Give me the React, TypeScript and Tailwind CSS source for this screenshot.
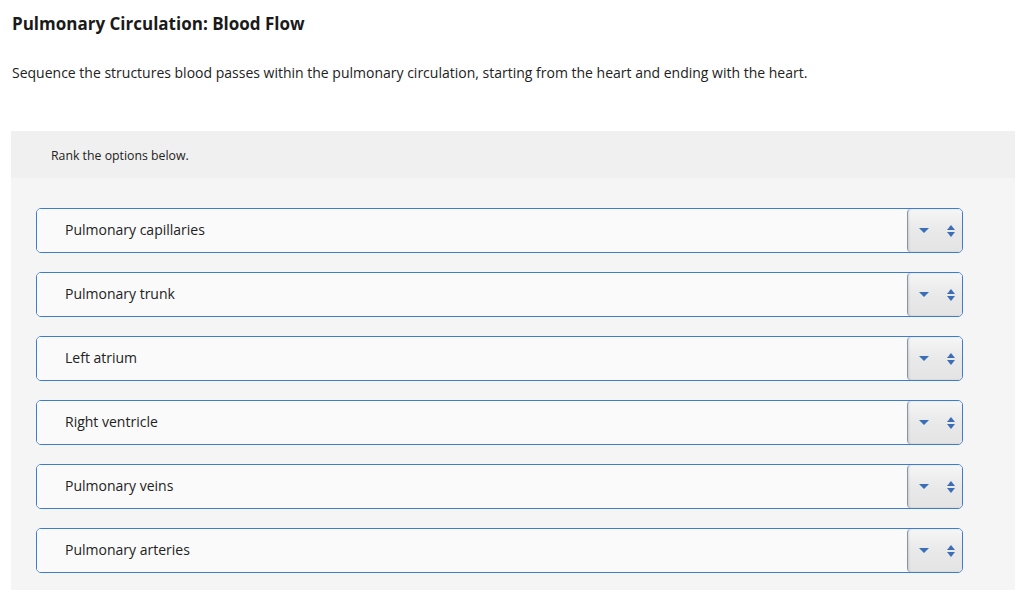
import React from "react";

const items = [
  "Pulmonary capillaries",
  "Pulmonary trunk",
  "Left atrium",
  "Right ventricle",
  "Pulmonary veins",
  "Pulmonary arteries",
];

function Row({ label }: { label: string }) {
  return (
    <div className="flex h-[45px] w-[927px] rounded-[5px] border border-[#3b7dd0]">
      <div className="flex flex-1 items-center rounded-l-[4px] bg-[#fafafa] pb-[2px] pl-[28px] text-[14px] text-[#222]">
        {label}
      </div>
      <div className="flex w-[55px] items-center justify-between rounded-[4px] border-l border-[#7f97b8] bg-gradient-to-b from-[#f6f6f6] via-[#e9e9e9] to-[#e4e4e4] pl-[11px] pr-[7px] shadow-[inset_1px_0_2px_rgba(0,0,0,0.12)]">
        <svg width="10" height="6" viewBox="0 0 10 6">
          <polygon points="0,0 10,0 5,5" fill="#3a6fb8" />
        </svg>
        <svg width="8" height="12" viewBox="0 0 8 12">
          <polygon points="4,0 8,5 0,5" fill="#3a6fb8" />
          <polygon points="0,7 8,7 4,12" fill="#3a6fb8" />
        </svg>
      </div>
    </div>
  );
}

export default function App() {
  return (
    <div className="min-h-[599px] bg-white font-['Open_Sans',sans-serif] text-[#222]">
      <div className="px-[12px] pt-[13px]">
        <h1 className="text-[17px] font-bold leading-[22px] text-[#1a1a1a]">
          Pulmonary Circulation: Blood Flow
        </h1>
        <p className="mt-[28px] text-[14px] leading-[20px] text-[#222]">
          Sequence the structures blood passes within the pulmonary circulation, starting from the heart and ending with the heart.
        </p>
      </div>
      <div className="ml-[11px] mt-[48px] w-[1004px] bg-[#f5f5f5] pb-[17px]">
        <div className="flex h-[47px] items-center bg-[#f0f0f0] pl-[40px] pt-[4px] text-[12.3px] text-[#222]">
          Rank the options below.
        </div>
        <div className="flex flex-col gap-[19px] pl-[25px] pt-[30px]">
          {items.map((it) => (
            <Row key={it} label={it} />
          ))}
        </div>
      </div>
    </div>
  );
}
